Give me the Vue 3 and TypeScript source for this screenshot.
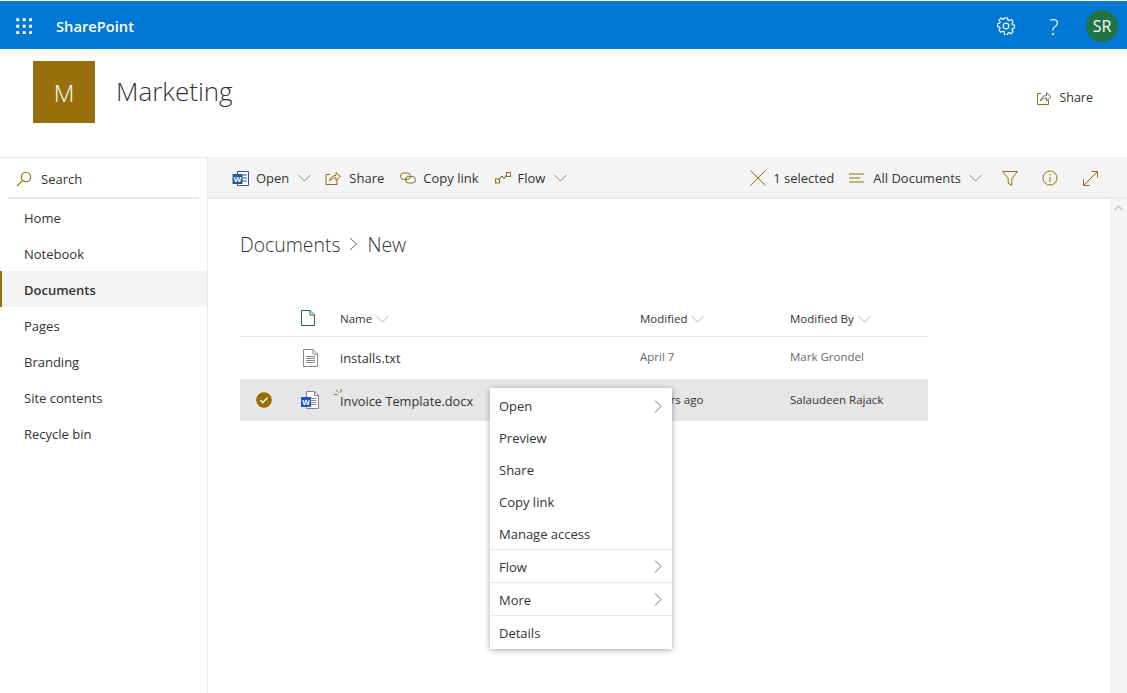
<script setup lang="ts">
interface MenuItem {
  label: string;
  more?: boolean;
  sep?: boolean;
}

const navItems = ['Home', 'Notebook', 'Documents', 'Pages', 'Branding', 'Site contents', 'Recycle bin'];

const menuItems: MenuItem[] = [
  { label: 'Open', more: true },
  { label: 'Preview' },
  { label: 'Share' },
  { label: 'Copy link' },
  { label: 'Manage access' },
  { label: 'Flow', more: true, sep: true },
  { label: 'More', more: true, sep: true },
  { label: 'Details', sep: true }
];
</script>

<template>
  <div class="page">
    <!-- top bar -->
    <header class="suite-bar">
      <svg class="waffle" width="16" height="16" viewBox="0 0 16 16" fill="#fff">
        <rect v-for="n in 9" :key="n" :x="((n - 1) % 3) * 6.5 + 0.2" :y="Math.floor((n - 1) / 3) * 6.5 + 0.2" width="3" height="3" />
      </svg>
      <span class="brand">SharePoint</span>
      <div class="suite-right">
        <svg width="18" height="18" viewBox="0 0 18 18" fill="none" stroke="#fff" stroke-width="1.2">
          <path d="M7.400 1h3.200l.4 2.300 1.300.6 2-1.300 2.200 2.300-1.300 1.900.6 1.400 2.200.4v3l-2.200.5-.6 1.300 1.300 2-2.200 2.200-2-1.300-1.300.6-.4 2.100H7.400L7 15.400l-1.300-.6-2 1.300-2.200-2.200 1.300-2-.6-1.300L0 10.100v-3l2.200-.4.6-1.400-1.300-1.900 2.200-2.300 2 1.300 1.300-.6z" transform="translate(0.5 0) scale(0.95)" />
          <circle cx="9" cy="9" r="2.800" />
        </svg>
        <span class="help">?</span>
        <span class="avatar">SR</span>
      </div>
    </header>

    <!-- site header -->
    <section class="site-head">
      <div class="site-logo">M</div>
      <h1 class="site-title">Marketing</h1>
      <button class="site-share">
        <svg width="16" height="16" viewBox="0 0 16 16" fill="none" stroke="#986f0b" stroke-width="1">
          <path d="M5 3.500H1.500v11h11V10" />
          <path d="M4.500 11c.5-3.500 3-5.500 6-5.500V2.800l4.500 4-4.500 4V8c-2.500 0-4.500 1-6 3z" stroke="#666" />
        </svg>
        Share
      </button>
    </section>

    <div class="workspace">
      <!-- left nav -->
      <aside class="side-nav">
        <div class="search-box">
          <svg width="16" height="16" viewBox="0 0 16 16" fill="none" stroke="#986f0b" stroke-width="1.1">
            <circle cx="10" cy="6" r="4.700" />
            <path d="M6.600 9.400 1 15" />
          </svg>
          <span>Search</span>
        </div>
        <ul class="nav-list">
          <li v-for="item in navItems" :key="item" :class="{ active: item === 'Documents' }">{{ item }}</li>
        </ul>
      </aside>

      <main class="main">
        <!-- command bar -->
        <div class="command-bar">
          <div class="cmd-group">
            <span class="cmd open-cmd">
              <svg width="17" height="17" viewBox="0 0 17 17">
                <path d="M5.500 1.500h11v14h-11z" fill="#fff" stroke="#2b579a" />
                <path d="M10 5h5M10 8h5M10 11h5" stroke="#2b579a" />
                <rect x="0.500" y="4" width="10" height="10" fill="#2b579a" />
                <text x="5.500" y="12" text-anchor="middle" font-size="8" font-weight="700" fill="#fff" font-family="'Liberation Sans', sans-serif">W</text>
              </svg>
              Open
              <svg class="chev" width="13" height="8" viewBox="0 0 13 8"><path d="M.5 1l6 6 6-6" fill="none" stroke="#8a8886" /></svg>
            </span>
            <span class="cmd">
              <svg width="17" height="16" viewBox="0 0 17 16" fill="none" stroke="#986f0b" stroke-width="1">
                <path d="M5 4.500H1v10h11V10" />
                <path d="M4.500 11c.5-3.500 3-5.500 6.500-5.500V2.500l4.500 4-4.500 4V7.800c-2.500 0-4.800 1-6.500 3.200z" />
              </svg>
              Share
            </span>
            <span class="cmd">
              <svg width="16" height="12" viewBox="0 0 16 12" fill="none" stroke="#986f0b" stroke-width="1">
                <rect x="0.500" y="1" width="10" height="6.500" rx="3.200" />
                <rect x="5.500" y="4.500" width="10" height="6.500" rx="3.200" stroke="#7a6a3c" />
              </svg>
              Copy link
            </span>
            <span class="cmd">
              <svg width="16" height="12" viewBox="0 0 16 12" fill="none" stroke="#986f0b" stroke-width="1">
                <rect x="0.500" y="7" width="4" height="4" />
                <rect x="11.500" y="0.500" width="4" height="4" />
                <path d="M4 7.500 7 4l2 2.500L11.500 3" stroke="#555" />
              </svg>
              Flow
              <svg class="chev" width="13" height="8" viewBox="0 0 13 8"><path d="M.5 1l6 6 6-6" fill="none" stroke="#8a8886" /></svg>
            </span>
          </div>
          <div class="cmd-group right">
            <span class="cmd">
              <svg width="16" height="16" viewBox="0 0 16 16" stroke="#986f0b" stroke-width="1"><path d="M.5.5l15 15M15.500.5l-15 15" /></svg>
              1 selected
            </span>
            <span class="cmd views">
              <svg width="16" height="10" viewBox="0 0 16 10" stroke="#986f0b" stroke-width="1"><path d="M0 1h15M0 5h11M0 9h15" /></svg>
              All Documents
              <svg class="chev" width="13" height="8" viewBox="0 0 13 8"><path d="M.5 1l6 6 6-6" fill="none" stroke="#8a8886" /></svg>
            </span>
            <svg class="tool filter" width="16" height="15" viewBox="0 0 16 15" fill="none" stroke="#986f0b" stroke-width="1"><path d="M.5.500h15L9.800 7.500v6.800l-3.600-2V7.500z" /></svg>
            <svg class="tool info" width="16" height="16" viewBox="0 0 16 16" fill="none" stroke="#986f0b" stroke-width="1">
              <circle cx="8" cy="8" r="7" />
              <path d="M8 7v5M8 4v1.500" />
            </svg>
            <svg class="tool expand" width="15" height="15" viewBox="0 0 15 15" fill="none" stroke="#986f0b" stroke-width="1"><path d="M.8 14.200 14.200.8M8.500.5h6v6M.5 8.500v6h6" /></svg>
          </div>
        </div>

        <div class="content-wrap">
          <div class="content">
            <div class="breadcrumb">
              <span>Documents</span>
              <svg width="9" height="14" viewBox="0 0 9 14"><path d="M1 1l6.500 6L1 13" fill="none" stroke="#666" /></svg>
              <span>New</span>
            </div>

            <div class="doc-table">
              <div class="row head">
                <span class="col-icon">
                  <svg width="14" height="16" viewBox="0 0 14 16" fill="none" stroke="#107c41" stroke-width="1"><path d="M.5.500h8.500l4.500 4.500v10.500H.5zM9 .5V5h4.500" /></svg>
                </span>
                <span class="col-name">Name <svg class="sort" width="13" height="8" viewBox="0 0 13 8"><path d="M.5 1l6 6 6-6" fill="none" stroke="#b5b3b1" /></svg></span>
                <span class="col-mod">Modified <svg class="sort" width="13" height="8" viewBox="0 0 13 8"><path d="M.5 1l6 6 6-6" fill="none" stroke="#b5b3b1" /></svg></span>
                <span class="col-by">Modified By <svg class="sort" width="13" height="8" viewBox="0 0 13 8"><path d="M.5 1l6 6 6-6" fill="none" stroke="#b5b3b1" /></svg></span>
              </div>

              <div class="row item">
                <span class="col-icon txt-icon">
                  <svg width="15" height="18" viewBox="0 0 15 18" fill="#fff" stroke="#8a8886" stroke-width="1">
                    <path d="M.5.500h9.500l4.500 4.500v12.500H.5z" />
                    <path d="M10 .5V5h4.500M3 7.500h9M3 9.500h9M3 11.500h9M3 13.500h9" fill="none" />
                  </svg>
                </span>
                <span class="col-name file">installs.txt</span>
                <span class="col-mod small">April 7</span>
                <span class="col-by small">Mark Grondel</span>
              </div>

              <div class="row item selected">
                <span class="col-check">
                  <svg width="18" height="18" viewBox="0 0 18 18">
                    <circle cx="9" cy="9" r="8.400" fill="#986f0b" stroke="#fff" stroke-width="1" />
                    <path d="M5.500 9.200l2.400 2.300 4.600-4.700" fill="none" stroke="#fff" stroke-width="1.300" />
                  </svg>
                </span>
                <span class="col-icon">
                  <svg width="18" height="18" viewBox="0 0 18 18">
                    <path d="M5.500.5h8l4 4v13h-12z" fill="#fff" stroke="#8a8886" />
                    <path d="M13.500.5v4h4M10 7.500h5.500M10 9.500h5.500M10 11.500h5.500M10 13.500h5.500" fill="none" stroke="#8a8886" />
                    <rect x="0" y="6" width="10" height="10" fill="#185abd" />
                    <text x="5" y="14" text-anchor="middle" font-size="8" font-weight="700" fill="#fff" font-family="'Liberation Sans', sans-serif">W</text>
                  </svg>
                </span>
                <span class="col-name file new-file">
                  <svg class="new-mark" width="8" height="8" viewBox="0 0 8 8" stroke="#986f0b" stroke-width="1"><path d="M0 5.500h3.500M4.500 3.500 2 1M7 0v3.500" /></svg>
                  Invoice Template.docx
                </span>
                <span class="col-mod small strong">2 hours ago</span>
                <span class="col-by small strong">Salaudeen Rajack</span>
              </div>
            </div>

            <!-- context menu -->
            <ul class="context-menu">
              <li v-for="item in menuItems" :key="item.label" :class="{ sep: item.sep }">
                <span>{{ item.label }}</span>
                <svg v-if="item.more" width="8" height="13" viewBox="0 0 8 13"><path d="M1 .5l6 6-6 6" fill="none" stroke="#767676" /></svg>
              </li>
            </ul>
          </div>

          <div class="scroll-rail">
            <svg width="9" height="6" viewBox="0 0 9 6"><path d="M.5 5l4-4 4 4" fill="none" stroke="#c8c6c4" stroke-width="1.500" /></svg>
          </div>
        </div>
      </main>
    </div>
  </div>
</template>

<style>
html,
body {
  margin: 0;
  background: #fff;
}
</style>

<style scoped>
* {
  box-sizing: border-box;
}

.page {
  width: 1127px;
  height: 693px;
  overflow: hidden;
  display: flex;
  flex-direction: column;
  background: #fff;
  color: #333;
  font-family: "Open Sans", "Noto Sans", sans-serif;
  font-size: 13px;
}

/* top bar */
.suite-bar {
  height: 48px;
  margin-top: 1px;
  flex-shrink: 0;
  display: flex;
  align-items: center;
  padding: 2px 24px 0 16px;
  background: #0078d4;
  color: #fff;
}

.waffle {
  margin-right: 24px;
}

.brand {
  font-size: 14.7px;
  font-weight: 600;
}

.suite-right {
  margin-left: auto;
  display: flex;
  align-items: center;
}

.help {
  width: 16px;
  margin-left: 31px;
  text-align: center;
  font-size: 22px;
  line-height: 26px;
  font-weight: 300;
}

.avatar {
  width: 32px;
  height: 32px;
  margin-left: 24px;
  margin-right: -15px;
  border-radius: 50%;
  display: flex;
  align-items: center;
  justify-content: center;
  background: #217346;
  font-size: 16px;
}

/* site header */
.site-head {
  height: 108px;
  flex-shrink: 0;
  display: flex;
  align-items: flex-start;
  padding: 12px 34px 0 33px;
}

.site-logo {
  width: 62px;
  height: 62px;
  display: flex;
  align-items: center;
  justify-content: center;
  background: #986f0b;
  color: #fff;
  font-size: 24px;
  font-weight: 300;
}

.site-title {
  margin: 10px 0 0 21px;
  font-size: 26px;
  line-height: 40px;
  font-weight: 300;
  color: #333;
}

.site-share {
  margin: 28px 0 0 auto;
  display: flex;
  align-items: center;
  gap: 7px;
  padding: 0;
  border: none;
  background: none;
  color: #333;
  font: inherit;
  font-size: 12.5px;
}

.workspace {
  flex: 1;
  min-height: 0;
  display: flex;
}

/* left nav */
.side-nav {
  width: 208px;
  flex-shrink: 0;
  border-top: 1px solid #eaeaea;
  border-right: 1px solid #eaeaea;
}

.search-box {
  height: 41px;
  margin: 0 8px;
  padding: 3px 0 0 8px;
  display: flex;
  align-items: center;
  gap: 9px;
  border-bottom: 2px solid #eaeaea;
}

.nav-list {
  list-style: none;
  margin: 0;
  padding: 0;
}

.nav-list li {
  height: 36px;
  padding: 2px 0 0 24px;
  line-height: 34px;
  color: #333;
}

.nav-list li.active {
  padding-left: 22px;
  border-left: 2px solid #986f0b;
  background: #f4f4f4;
  font-weight: 600;
}

/* command bar */
.main {
  flex: 1;
  min-width: 0;
  display: flex;
  flex-direction: column;
}

.command-bar {
  height: 42px;
  flex-shrink: 0;
  display: flex;
  align-items: center;
  justify-content: space-between;
  padding: 2px 29px 0 24px;
  background: #f4f4f4;
  border-bottom: 2px solid #eaeaea;
}

.cmd-group {
  display: flex;
  align-items: center;
  gap: 16px;
}

.cmd {
  display: flex;
  align-items: center;
  gap: 7px;
  white-space: nowrap;
}

.chev {
  margin-left: 2px;
}

.open-cmd {
  margin-right: -2px;
}

.cmd-group.right {
  gap: 0;
}

.views {
  margin-left: 15px;
  gap: 8px;
}

.views .chev {
  margin-left: 0;
}

.filter {
  margin-left: 20px;
}

.info {
  margin-left: 24px;
}

.expand {
  margin-left: 25px;
}

/* content */
.content-wrap {
  flex: 1;
  min-height: 0;
  display: flex;
}

.content {
  flex: 1;
  position: relative;
  padding: 32px 182px 0 32px;
}

.scroll-rail {
  width: 17px;
  flex-shrink: 0;
  padding: 6px 0 0 4px;
  background: #f4f4f4;
}

.scroll-rail svg {
  display: block;
}

.breadcrumb {
  height: 26px;
  display: flex;
  align-items: center;
  gap: 9px;
  font-size: 19.4px;
  font-weight: 300;
  color: #333;
}

.doc-table {
  margin-top: 43px;
}

.row {
  display: grid;
  grid-template-columns: 48px 52px 300px 150px 1fr;
  align-items: center;
}

.row.head {
  height: 37px;
  font-size: 11.5px;
  border-bottom: 1px solid #eaeaea;
}

.row.head .col-icon {
  grid-column: 2;
}

.row.item {
  height: 42px;
}

.row.item.selected {
  background: #e6e6e6;
}

.row.item .col-icon {
  grid-column: 2;
}

.col-icon {
  padding-left: 13px;
  display: flex;
}

.row.item .txt-icon {
  padding-left: 15px;
}

.col-check {
  grid-column: 1;
  padding-left: 15px;
  display: flex;
}

.sort {
  margin-left: 1px;
}

.file {
  color: #333;
  font-size: 12.8px;
}

.new-file {
  position: relative;
  padding-top: 1px;
}

.new-mark {
  position: absolute;
  left: -6px;
  top: -2px;
}

.small {
  padding-bottom: 3px;
  font-size: 11.5px;
  color: #666;
}

.small.strong {
  padding-bottom: 2px;
  color: #333;
}

/* context menu */
.context-menu {
  position: absolute;
  left: 282px;
  top: 189px;
  width: 182px;
  height: 261px;
  margin: 0;
  padding: 2px 0 0;
  list-style: none;
  background: #fff;
  box-shadow: 0 1px 6px rgba(0, 0, 0, 0.35);
}

.context-menu li {
  height: 32px;
  display: flex;
  align-items: center;
  justify-content: space-between;
  padding: 0 10px 0 9px;
}

.context-menu li.sep {
  height: 33px;
  padding-top: 1px;
  border-top: 1px solid #eaeaea;
}

.context-menu li:nth-child(6) {
  margin-top: -1px;
}
</style>
